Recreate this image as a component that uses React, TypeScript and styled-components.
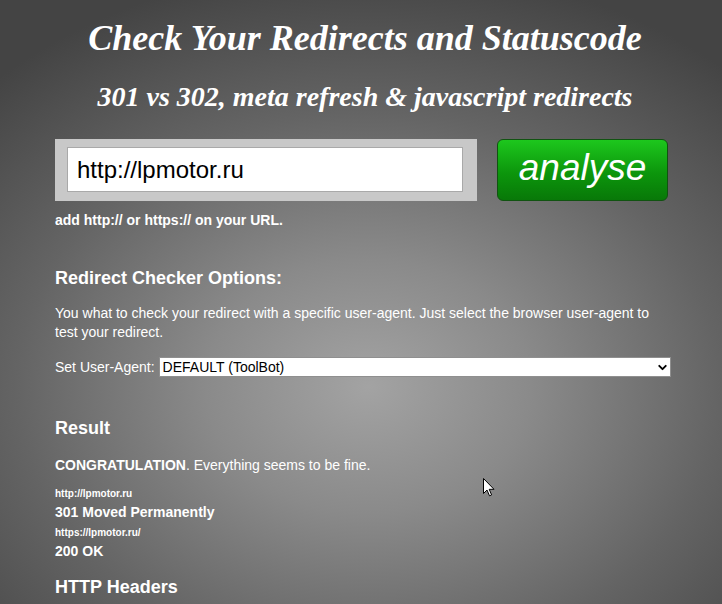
import styled, { createGlobalStyle } from "styled-components";
import { ChevronDown } from "lucide-react";

const GlobalStyle = createGlobalStyle`
    html, body {
        margin: 0;
        padding: 0;
    }
    body {
        min-height: 604px;
        background: radial-gradient(
            ellipse 75% 70% at 51% 64%,
            #a3a3a3 0%,
            #8a8a8a 30%,
            #646464 65%,
            #444444 100%
        );
        background-color: #404040;
        font-family: "Liberation Sans", Arial, sans-serif;
        color: #fff;
    }
`;

const Page = styled.div`
    position: relative;
    min-height: 604px;
    overflow: hidden;
`;

const Wrapper = styled.div`
    width: 616px;
    margin: 0 auto;
    padding: 18px 0 0 4px;
    display: flex;
    flex-direction: column;
`;

const Title = styled.h1`
    margin: 0;
    padding-left: 4px;
    font-family: "Liberation Serif", "Times New Roman", serif;
    font-style: italic;
    font-weight: bold;
    font-size: 36px;
    line-height: 41px;
    text-align: center;
`;

const SubTitle = styled.h2`
    margin: 22px 0 0;
    padding-left: 4px;
    font-family: "Liberation Serif", "Times New Roman", serif;
    font-style: italic;
    font-weight: bold;
    font-size: 28px;
    line-height: 32px;
    text-align: center;
`;

const SearchRow = styled.form`
    margin-top: 26px;
    display: flex;
    gap: 20px;
    height: 62px;
`;

const InputFrame = styled.div`
    width: 422px;
    box-sizing: border-box;
    background: #c8c8c8;
    padding: 8px 14px 9px 12px;
`;

const UrlInput = styled.input`
    width: 100%;
    height: 45px;
    box-sizing: border-box;
    border: 1px solid #a9a9a9;
    background: #fff;
    padding: 0 9px;
    font-family: "Liberation Sans", Arial, sans-serif;
    font-size: 24px;
    color: #000;
    outline: none;
`;

const AnalyseButton = styled.button`
    width: 171px;
    height: 62px;
    box-sizing: border-box;
    border: 1px solid #115311;
    border-radius: 6px;
    background: linear-gradient(#1dc71d, #0c960c 55%, #087808);
    color: #fff;
    font-family: "Liberation Sans", Arial, sans-serif;
    font-style: italic;
    font-size: 37px;
    padding: 0 0 4px;
    cursor: pointer;
`;

const Hint = styled.p`
    margin: 11px 0 0;
    font-size: 14px;
    line-height: 16px;
    font-weight: bold;
`;

const SectionTitle = styled.h3<{ $gap: number }>`
    margin: ${(p) => p.$gap}px 0 0;
    font-size: 18px;
    line-height: 21px;
    font-weight: bold;
`;

const Text = styled.p`
    margin: 15px 0 0;
    font-size: 14px;
    line-height: 19px;
`;

const AgentRow = styled.div`
    margin-top: 15px;
    display: flex;
    align-items: center;
    gap: 4px;
    font-size: 14px;
`;

const SelectBox = styled.div`
    flex: 1;
    height: 18px;
    display: flex;
    align-items: center;
    background: #fff;
    border: 1px solid #8f8f8f;
    color: #000;
    padding-right: 1px;
`;

const AgentSelect = styled.select`
    flex: 1;
    appearance: none;
    border: none;
    background: transparent;
    font-family: "Liberation Sans", Arial, sans-serif;
    font-size: 14px;
    padding: 0 3px;
    color: #000;
    outline: none;
`;

const Message = styled.p`
    margin: 18px 0 0;
    font-size: 14px;
    line-height: 16px;
`;

const HopUrl = styled.div<{ $gap: number }>`
    margin-top: ${(p) => p.$gap}px;
    font-size: 10px;
    line-height: 12px;
    font-weight: bold;
`;

const HopStatus = styled.div`
    margin-top: 4px;
    font-size: 14px;
    line-height: 16px;
    font-weight: bold;
`;

const Pointer = styled.svg`
    position: absolute;
    left: 483px;
    top: 478px;
`;

const hops = [
    { url: "http://lpmotor.ru", status: "301 Moved Permanently", gap: 15 },
    { url: "https://lpmotor.ru/", status: "200 OK", gap: 7 },
];

const App = () => {
    return (
        <Page>
            <GlobalStyle />
            <Wrapper>
                <Title>Check Your Redirects and Statuscode</Title>
                <SubTitle>
                    301 vs 302, meta refresh &amp; javascript redirects
                </SubTitle>
                <SearchRow onSubmit={(e) => e.preventDefault()}>
                    <InputFrame>
                        <UrlInput defaultValue="http://lpmotor.ru" />
                    </InputFrame>
                    <AnalyseButton type="submit">analyse</AnalyseButton>
                </SearchRow>
                <Hint>add http:// or https:// on your URL.</Hint>

                <SectionTitle $gap={40}>Redirect Checker Options:</SectionTitle>
                <Text>
                    You what to check your redirect with a specific user-agent.
                    Just select the browser user-agent to test your redirect.
                </Text>
                <AgentRow>
                    <span>Set User-Agent:</span>
                    <SelectBox>
                        <AgentSelect defaultValue="default">
                            <option value="default">DEFAULT (ToolBot)</option>
                        </AgentSelect>
                        <ChevronDown size={13} strokeWidth={3.5} />
                    </SelectBox>
                </AgentRow>

                <SectionTitle $gap={41}>Result</SectionTitle>
                <Message>
                    <b>CONGRATULATION</b>. Everything seems to be fine.
                </Message>
                {hops.map((hop) => (
                    <div key={hop.url}>
                        <HopUrl $gap={hop.gap}>{hop.url}</HopUrl>
                        <HopStatus>{hop.status}</HopStatus>
                    </div>
                ))}
                <SectionTitle $gap={18}>HTTP Headers</SectionTitle>
            </Wrapper>
            <Pointer width="12" height="19" viewBox="0 0 12 19">
                <path
                    d="M0.5 0.5 L0.5 15.5 L4 12 L6.5 17.8 L8.6 16.9 L6.2 11.3 L11 11.3 Z"
                    fill="#fff"
                    stroke="#000"
                    strokeWidth="1"
                    strokeLinejoin="round"
                />
            </Pointer>
        </Page>
    );
};

export default App;
